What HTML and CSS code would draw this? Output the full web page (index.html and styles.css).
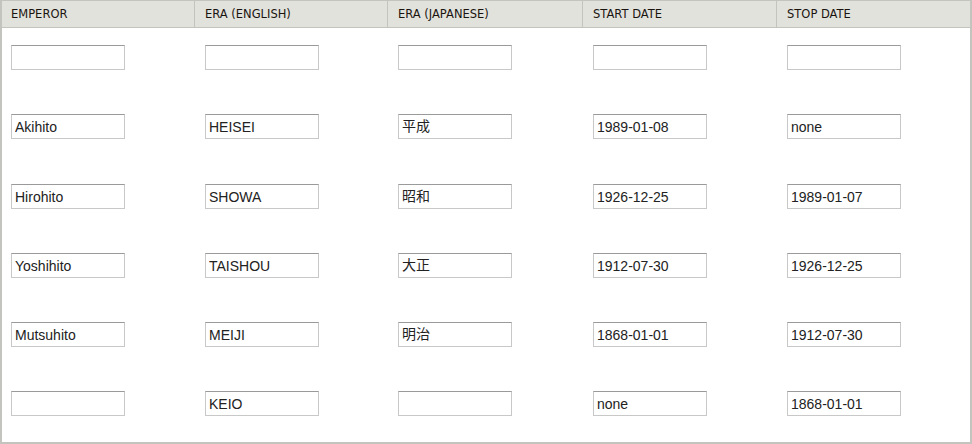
FILE: index.html
```html
<!DOCTYPE html>
<html>
<head>
<meta charset="utf-8">
<link rel="stylesheet" href="styles.css">
</head>
<body>
<div class="frame">
<table class="grid">
<colgroup>
<col class="c1"><col class="c2"><col class="c3"><col class="c4"><col class="c5">
</colgroup>
<thead>
<tr><th>EMPEROR</th><th>ERA (ENGLISH)</th><th>ERA (JAPANESE)</th><th>START DATE</th><th>STOP DATE</th></tr>
</thead>
<tbody>
<tr><td><input class="field" value=""></td><td><input class="field" value=""></td><td><input class="field jp" value=""></td><td><input class="field" value=""></td><td><input class="field" value=""></td></tr>
<tr class="tall"><td><input class="field" value="Akihito"></td><td><input class="field" value="HEISEI"></td><td><input class="field jp" value="平成"></td><td><input class="field" value="1989-01-08"></td><td><input class="field" value="none"></td></tr>
<tr><td><input class="field" value="Hirohito"></td><td><input class="field" value="SHOWA"></td><td><input class="field jp" value="昭和"></td><td><input class="field" value="1926-12-25"></td><td><input class="field" value="1989-01-07"></td></tr>
<tr><td><input class="field" value="Yoshihito"></td><td><input class="field" value="TAISHOU"></td><td><input class="field jp" value="大正"></td><td><input class="field" value="1912-07-30"></td><td><input class="field" value="1926-12-25"></td></tr>
<tr><td><input class="field" value="Mutsuhito"></td><td><input class="field" value="MEIJI"></td><td><input class="field jp" value="明治"></td><td><input class="field" value="1868-01-01"></td><td><input class="field" value="1912-07-30"></td></tr>
<tr><td><input class="field" value=""></td><td><input class="field" value="KEIO"></td><td><input class="field jp" value=""></td><td><input class="field" value="none"></td><td><input class="field" value="1868-01-01"></td></tr>
</tbody>
</table>
</div>
</body>
</html>
```
FILE: styles.css
```css
html, body {
  margin: 0;
  padding: 0;
  background: #ffffff;
}
.frame {
  width: 972px;
  height: 444px;
  box-sizing: border-box;
  border-style: solid;
  border-color: #c4c4be;
  border-width: 1px 2px 2px 2px;
  overflow: hidden;
}
.grid {
  width: 968px;
  border-collapse: separate;
  border-spacing: 0;
  table-layout: fixed;
}
.c1 { width: 193px; }
.c2 { width: 193px; }
.c3 { width: 195px; }
.c4 { width: 194px; }
.c5 { width: 193px; }
.grid th {
  background: #e2e2dc;
  font-family: "DejaVu Sans", sans-serif;
  font-size: 11.5px;
  font-weight: normal;
  color: #1a1410;
  text-align: left;
  line-height: 13px;
  padding: 7px 10px 6px 10px;
  border-bottom: 1px solid #c4c4be;
  border-right: 1px solid #c4c4be;
  white-space: nowrap;
  overflow: hidden;
}
.grid th:first-child {
  padding-left: 9px;
}
.grid th:last-child {
  border-right: none;
}
.grid td {
  padding: 17px 10px 27px 10px;
  vertical-align: top;
  line-height: 0;
}
.grid td:first-child {
  padding-left: 9px;
}
.grid .tall td {
  padding-bottom: 28px;
}
.field {
  width: 114px;
  height: 25px;
  box-sizing: border-box;
  margin: 0;
  padding: 0 3px;
  border: 1px solid #c8c8c8;
  border-top-color: #9a9a9a;
  background: #ffffff;
  font-family: "Liberation Sans", Arial, "Noto Sans CJK JP", sans-serif;
  font-size: 14px;
  color: #222222;
  outline: none;
}
.field.jp {
  font-family: "Noto Sans CJK JP", sans-serif;
  padding-bottom: 3px;
}
```
